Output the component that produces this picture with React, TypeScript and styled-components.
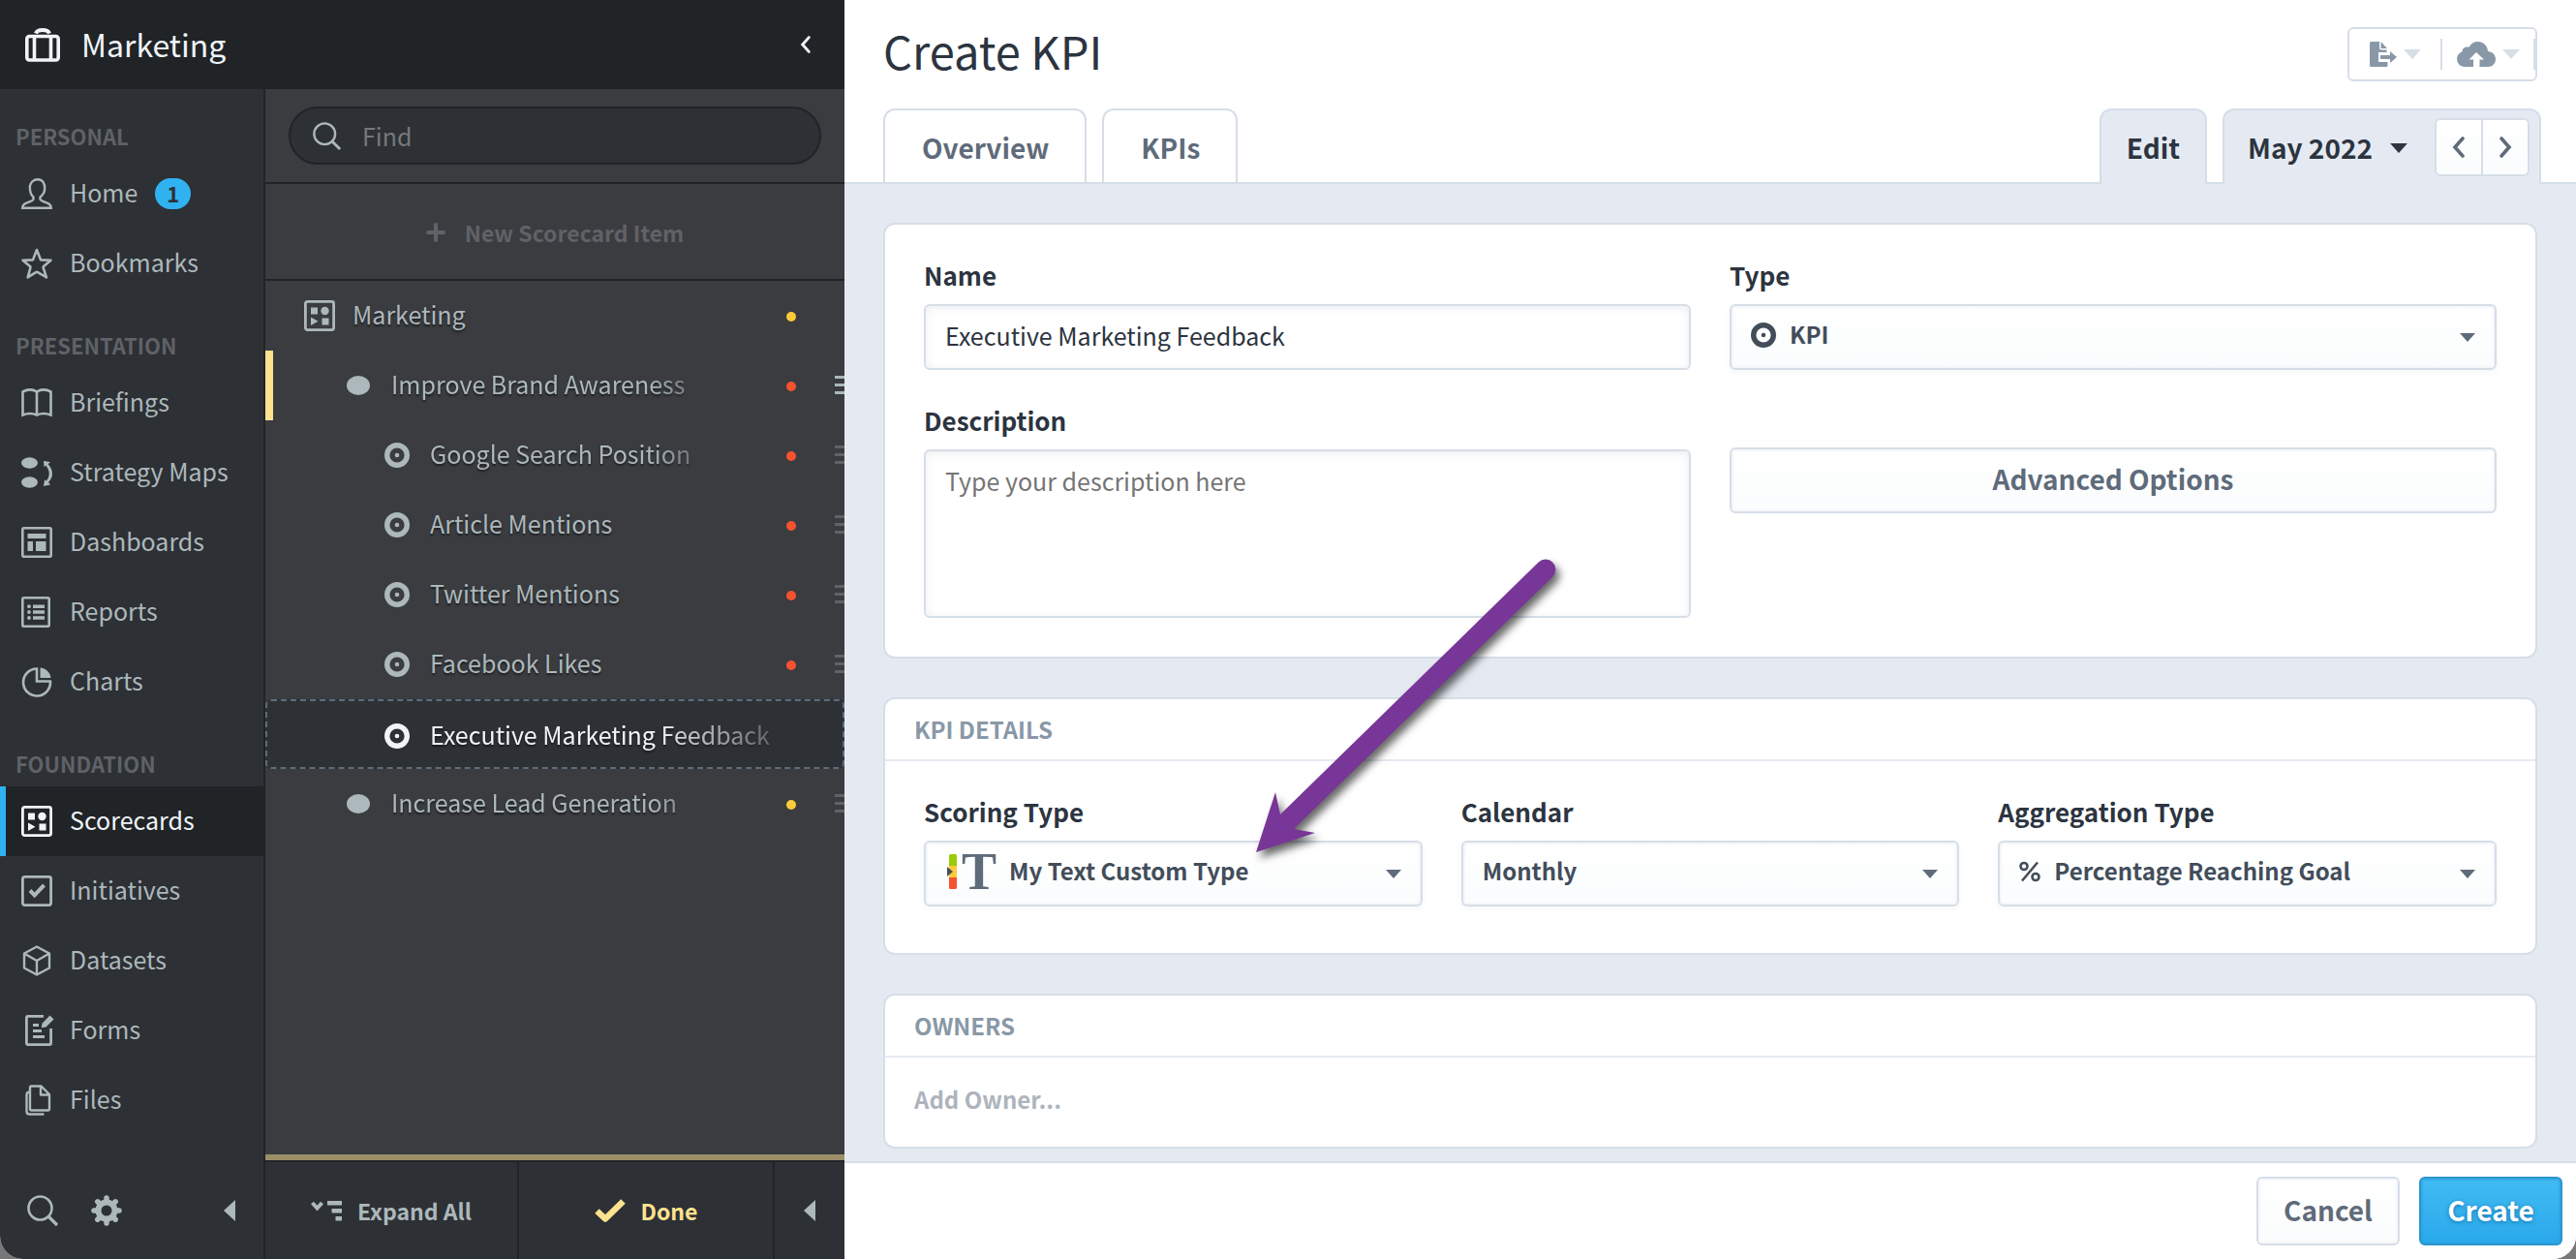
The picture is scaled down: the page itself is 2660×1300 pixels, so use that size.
import React from 'react';
import styled, { createGlobalStyle, css } from 'styled-components';

const c = {
  ink: '#2c3440',
  slate: '#5f6b7a',
  muted: '#8998a7',
  line: '#d6dee7',
  canvas: '#e5eaf2',
  black: '#202427',
  rail: '#2d3035',
  tree: '#3a3c40',
  fog: '#acb8bb',
  dim: '#5f6266',
  snow: '#f0f4f9',
  blue: '#30b2f0',
  yellow: '#ffe28f',
  amber: '#fdcb3a',
  red: '#f5522f',
};

const Global = createGlobalStyle`
  *, *::before, *::after { box-sizing: border-box; }
  body { margin: 0; background: #77787a; }
  body, button, input, select, textarea {
    font-family: "Noto Sans CJK SC", "Noto Sans", sans-serif;
    font-size: 25px;
    line-height: 36px;
  }
  button { border: 0; padding: 0; background: none; color: inherit; cursor: pointer; }
  a { color: inherit; text-decoration: none; }
  h1, h2, ul { margin: 0; padding: 0; }
  ul { list-style: none; }
  svg { display: block; flex: none; overflow: visible; }
`;

/* ---------- shell ---------- */

const Shell = styled.div`
  display: flex;
  height: 100vh;
  min-height: 1240px;
  overflow: hidden;
  border-radius: 0 0 24px 24px;
  background: #fff;
`;

const Side = styled.aside`
  display: grid;
  grid-template: 92px minmax(0, 1fr) / 274px 598px;
  flex: none;
`;

const SideHeader = styled.header`
  grid-column: 1 / -1;
  display: flex;
  align-items: center;
  gap: 20px;
  padding: 0 34px 0 24px;
  background: ${c.black};
  color: ${c.snow};
`;

const Workspace = styled.span`
  flex: 1;
  font-size: 32px;
  line-height: 48px;
  padding-bottom: 2px;
`;

/* ---------- navigation rail ---------- */

const Rail = styled.nav`
  display: flex;
  flex-direction: column;
  border-right: 2px solid ${c.black};
  background: ${c.rail};
  color: ${c.fog};
`;

const RailTitle = styled.h2`
  height: 72px;
  padding: 26px 0 0 16px;
  color: ${c.dim};
  font-size: 22px;
  line-height: 44px;
  font-weight: 700;
`;

const RailLink = styled.a<{ $active?: boolean }>`
  display: flex;
  align-items: center;
  gap: 18px;
  height: 72px;
  padding-left: 22px;
  ${(p) =>
    p.$active &&
    css`
      margin-right: -2px;
      padding-left: 16px;
      border-left: 6px solid ${c.blue};
      background: ${c.black};
      color: ${c.snow};
    `}
`;

const Label = styled.span`
  padding-bottom: 4px;
`;

const Badge = styled.span`
  display: grid;
  place-items: center;
  width: 37px;
  height: 32px;
  border-radius: 16px;
  padding-bottom: 2px;
  background: ${c.blue};
  color: ${c.rail};
  font-size: 22px;
  line-height: 30px;
  font-weight: 700;
`;

const RailTools = styled.div`
  display: flex;
  align-items: center;
  gap: 34px;
  height: 100px;
  margin-top: auto;
  padding: 0 29px 0 28px;

  button:last-child { margin-left: auto; }
`;

/* ---------- scorecard tree ---------- */

const Tree = styled.section`
  display: flex;
  flex-direction: column;
  min-width: 0;
  overflow: hidden;
  background: ${c.tree};
  color: ${c.fog};
`;

const FindBar = styled.div`
  padding: 18px 24px;
  border-bottom: 2px solid ${c.black};
`;

const FindBox = styled.label`
  display: flex;
  align-items: center;
  gap: 22px;
  height: 60px;
  padding: 0 23px;
  border: 2px solid ${c.black};
  border-radius: 30px;
  background: ${c.rail};
`;

const FindInput = styled.input`
  flex: 1;
  min-width: 0;
  border: 0;
  padding: 0;
  outline: 0;
  background: none;
  color: ${c.fog};
  &::placeholder { color: #76787a; opacity: 1; }
`;

const NewItem = styled.button`
  display: flex;
  align-items: center;
  justify-content: center;
  gap: 20px;
  height: 100px;
  padding-top: 2px;
  border-bottom: 2px solid ${c.black};
  color: ${c.dim};
  font-size: 23px;
  font-weight: 700;
`;

const TreeList = styled.ul`
  flex: 1;
  border-bottom: 6px solid #9c8f68;
`;

const TreeRow = styled.li<{ $depth: number; $marked?: boolean; $selected?: boolean }>`
  display: flex;
  align-items: center;
  height: 72px;
  padding-left: ${(p) => 40 + p.$depth * 40}px;
  ${(p) =>
    p.$marked &&
    css`
      border-left: 8px solid ${c.yellow};
      padding-left: ${32 + p.$depth * 40}px;
    `}
  ${(p) =>
    p.$selected &&
    css`
      border: 2px dashed #5f6d7b;
      border-radius: 6px;
      padding-top: 4px;
      padding-left: ${38 + p.$depth * 40}px;
      background: ${c.rail};
      color: ${c.snow};
    `}
`;

const TreeLink = styled.a<{ $fade?: 'short' | 'long' }>`
  display: flex;
  align-items: center;
  gap: 18px;
  flex: 1;
  min-width: 0;
  white-space: nowrap;
  text-shadow: 0 2px 2px rgba(0, 0, 0, 0.5);
  ${(p) =>
    p.$fade === 'short' &&
    css`
      mask-image: linear-gradient(to left, transparent 62px, #000 140px);
    `}
  ${(p) =>
    p.$fade === 'long' &&
    css`
      mask-image: linear-gradient(to left, transparent 30px, #000 196px);
    `}
`;

const IconCell = styled.span`
  display: flex;
  justify-content: center;
  width: 32px;
`;

const Status = styled.span<{ $tone: string }>`
  width: 10px;
  height: 10px;
  margin: 2px 40px 0 0;
  border-radius: 50%;
  background: ${(p) => p.$tone};
`;

const Grip = styled.button<{ $on?: boolean }>`
  width: 10px;
  overflow: hidden;
  color: ${(p) => (p.$on ? c.fog : c.dim)};
`;

const NoGrip = styled.span`
  width: 10px;
`;

const TreeFooter = styled.footer`
  display: grid;
  grid-template-columns: 260px 264px 1fr;
  height: 102px;
  border-top: 2px solid ${c.black};
  background: ${c.rail};
`;

const FooterButton = styled.button<{ $accent?: boolean }>`
  display: flex;
  align-items: center;
  justify-content: center;
  gap: 16px;
  font-size: 23px;
  font-weight: 700;
  color: ${(p) => (p.$accent ? c.yellow : c.fog)};
  & + & { border-left: 2px solid ${c.black}; }
`;

/* ---------- main ---------- */

const Main = styled.main`
  display: flex;
  flex-direction: column;
  flex: 1;
  min-width: 0;
  color: ${c.ink};
`;

const MainHeader = styled.header`
  display: flex;
  align-items: center;
  justify-content: space-between;
  height: 112px;
  padding: 0 40px;
`;

const Title = styled.h1`
  font-size: 47px;
  line-height: 68px;
  font-weight: 400;
  padding-bottom: 8px;
`;

const Toolbar = styled.div`
  display: flex;
  align-items: center;
  height: 56px;
  border: 2px solid ${c.line};
  border-radius: 6px;
  color: ${c.muted};
`;

const ToolButton = styled.button`
  display: flex;
  align-items: center;
  gap: 7px;
  height: 32px;
  padding: 0 14px 0 15px;
  border-right: 2px solid ${c.line};
  &:first-child { padding: 0 20px 0 21px; }
`;

const TabBar = styled.div`
  display: flex;
  align-items: flex-end;
  gap: 16px;
  height: 78px;
  padding: 0 36px 0 40px;
  border-bottom: 2px solid ${c.line};
`;

const tab = css`
  display: flex;
  align-items: center;
  height: 76px;
  border: 2px solid ${c.line};
  border-bottom: 0;
  border-radius: 12px 12px 0 0;
  font-size: 28px;
  line-height: 40px;
  font-weight: 700;
`;

const Tab = styled.a`
  ${tab}
  padding: 2px 37px 0 38px;
  color: ${c.slate};
`;

const activeTab = css`
  height: 78px;
  margin-bottom: -2px;
  background: ${c.canvas};
  color: ${c.ink};
`;

const EditTab = styled.a`
  ${tab}
  ${activeTab}
  padding: 0 26px;
  margin-left: auto;
`;

const DateTab = styled.div`
  ${tab}
  ${activeTab}
  padding: 0 10px 0 24px;
`;

const MonthPicker = styled.div`
  display: grid;
  align-items: center;
  width: 193px;
  & > * { grid-area: 1 / 1; }
  & > svg { justify-self: end; margin: 2px 28px 0 0; pointer-events: none; }
`;

const MonthSelect = styled.select`
  appearance: none;
  border: 0;
  padding: 0;
  outline: 0;
  background: none;
  color: inherit;
  font-size: 28px;
  line-height: 40px;
  font-weight: 700;
`;

const Stepper = styled.div`
  display: flex;
  height: 60px;
  border: 2px solid ${c.line};
  border-radius: 6px;
  background: linear-gradient(#fff, #fafcfd);
  color: ${c.slate};
`;

const StepButton = styled.button`
  display: grid;
  place-items: center;
  width: 46px;
  & + & { width: 48px; border-left: 2px solid ${c.line}; }
`;

const Content = styled.form`
  display: flex;
  flex-direction: column;
  gap: 40px;
  flex: 1;
  min-height: 0;
  overflow: hidden;
  padding: 40px 40px 0;
  background: ${c.canvas};
`;

const Card = styled.section`
  flex: none;
  border: 2px solid ${c.line};
  border-radius: 12px;
  background: #fff;
`;

const CardTitle = styled.h2`
  height: 64px;
  padding: 13px 30px;
  border-bottom: 2px solid ${c.canvas};
  color: ${c.muted};
  font-size: 24px;
  line-height: 36px;
  font-weight: 700;
`;

const Fields = styled.div<{ $cols: number; $end?: number }>`
  display: grid;
  grid-template-columns: repeat(${(p) => p.$cols}, minmax(0, 1fr));
  gap: 32px 40px;
  padding: 32px 40px ${(p) => p.$end ?? 40}px;
`;

const Field = styled.div`
  position: relative;
  display: flex;
  flex-direction: column;
  gap: 10px;
`;

const FieldLabel = styled.label`
  font-size: 26px;
  line-height: 40px;
  font-weight: 700;
`;

const control = css`
  width: 100%;
  border: 2px solid ${c.line};
  border-radius: 6px;
  outline: 0;
  color: ${c.ink};
`;

const TextBox = styled.input`
  ${control}
  height: 68px;
  padding: 0 20px 4px;
  box-shadow: inset 0 2px 8px rgba(60, 80, 110, 0.1);
`;

const TextArea = styled.textarea`
  ${control}
  display: block;
  height: 174px;
  padding: 12px 20px;
  resize: none;
  box-shadow: inset 0 2px 8px rgba(60, 80, 110, 0.1);
  &::placeholder { color: #757575; opacity: 1; }
`;

const Picker = styled.div`
  display: grid;
  align-items: center;
  color: #434d5a;
  & > * { grid-area: 1 / 1; }
  & > svg { margin: 0 0 4px 22px; pointer-events: none; }
  & > svg:last-child { justify-self: end; margin: 0 22px 0 0; }
`;

const Select = styled.select<{ $indent: number }>`
  ${control}
  appearance: none;
  height: 68px;
  padding: 0 60px 6px ${(p) => p.$indent}px;
  background: linear-gradient(#fff, #fafcfd);
  box-shadow: inset 0 0 0 2px #f5f7fb, 0 2px 6px rgba(60, 80, 110, 0.05);
  color: inherit;
  font-weight: 700;
  font-size: 24px;
`;

const Push = styled.button`
  height: 68px;
  padding: 0 38px 4px;
  border: 2px solid ${c.line};
  border-radius: 6px;
  background: linear-gradient(#fff, #fafcfd);
  box-shadow: inset 0 0 0 2px #f5f7fb;
  color: ${c.slate};
  font-size: 28px;
  line-height: 40px;
  font-weight: 700;
`;

const Advanced = styled(Push)`
  width: 100%;
  margin-top: 48px;
`;

const OwnerInput = styled.input`
  display: block;
  width: 100%;
  height: 92px;
  padding: 0 30px 8px;
  border: 0;
  outline: 0;
  background: none;
  font-size: 24px;
  font-weight: 700;
  color: ${c.ink};
  &::placeholder { color: #adb4bc; opacity: 1; }
`;

const Actions = styled.footer`
  display: flex;
  justify-content: flex-end;
  gap: 20px;
  height: 101px;
  padding: 14px;
  border-top: 2px solid ${c.line};
  background: #fff;
`;

const ActionButton = styled(Push)<{ $primary?: boolean }>`
  width: 148px;
  height: 71px;
  padding: 0 0 4px;
  ${(p) =>
    p.$primary &&
    css`
      border-color: #2b96cd;
      background: linear-gradient(#41bbf2, #29a8eb);
      box-shadow: inset 0 0 0 2px rgba(43, 160, 220, 0.5);
      color: #fff;
      text-shadow: 0 1px 4px rgba(0, 60, 110, 0.5);
    `}
`;

const Pointer = styled.svg`
  position: absolute;
  left: 326px;
  bottom: 36px;
  z-index: 2;
  pointer-events: none;
  filter: drop-shadow(4px 6px 4px rgba(0, 0, 0, 0.6));
`;

/* ---------- icons ---------- */

type IconProps = { children: React.ReactNode; w?: number; h?: number; box?: string; line?: number };

const Icon = ({ children, w = 32, h = w, box = `0 0 ${w} ${h}`, line = 0 }: IconProps) => (
  <svg
    width={w}
    height={h}
    viewBox={box}
    fill={line ? 'none' : 'currentColor'}
    stroke={line ? 'currentColor' : 'none'}
    strokeWidth={line || undefined}
    aria-hidden="true"
  >
    {children}
  </svg>
);

const Solid = { fill: 'currentColor', stroke: 'none' };

const Suitcase = () => (
  <Icon w={40} line={3.6}>
    <rect x="3.8" y="11.5" width="32.400" height="24.500" rx="2.500" />
    <path d="M11.500 11v26M28.500 11v26" />
    <path strokeWidth="4" d="M13 8.500c1-3 3-3.500 7-3.500s6 .5 7 3.500" />
  </Icon>
);
const Person = () => (
  <Icon line={2.400}>
    <path d="M12.500 19.500v2c0 1.200-1 1.700-4 2.900-4 1.600-7.300 2.300-7.300 6.400h29.600c0-4.100-3.300-4.800-7.300-6.400-3-1.200-4-1.700-4-2.900v-2c2-1.500 4.500-5 4.700-8.500.3-6.500-2.700-9.800-7.200-9.800S9.500 4.500 8.800 8.500c0 4 1.200 9 3.700 11z" />
  </Icon>
);
const Star = () => (
  <Icon line={2.600}>
    <path strokeLinejoin="round" d="M16 2l3.800 9.700c.2.500.6.700 1 .7l9.700.3-7.400 6.300c-.5.400-.6.900-.5 1.400l3.400 10-9.100-5.300c-.6-.3-1.200-.3-1.800 0L6.700 30.400l2.700-10c.2-.6 0-1-.4-1.400l-7.500-6.300 9.700-.3c.5 0 .8-.2 1-.7z" />
  </Icon>
);
const Book = () => (
  <Icon line={2.600}>
    <path d="M1.500 4.500C7 1.500 12 2 16 4.500c4-2.500 9-3 14.500 0v24c-5-2-10-2-14.500 0-4.500-2-9.500-2-14.500 0z" />
    <path d="M16 4.500v24.500" />
  </Icon>
);
const Maps = () => (
  <Icon>
    <ellipse cx="8.500" cy="6" rx="8.500" ry="5.800" />
    <ellipse cx="8.500" cy="26" rx="8.500" ry="5.800" />
    <path d="M23 4l7 1-2.300 2.200c3 3.500 4.300 6.300 4.300 9.800s-1.300 6-4 9l2 2.600-7 1.400 1-6.800 1.800 1.300c2-2.500 2.900-4.600 2.900-7.500s-1-5.300-3.200-8.300L23.500 10z" />
  </Icon>
);
const Dashboard = () => (
  <Icon line={2.600}>
    <rect x="1.300" y="1.300" width="29.400" height="29.400" rx="1.500" />
    <path {...Solid} d="M6.500 7h19v5h-19zM6.500 15h5.500v10H6.500zM15 15h10.500v10H15z" />
  </Icon>
);
const Report = () => (
  <Icon line={2.600}>
    <rect x="1.300" y="1.300" width="27.400" height="29.400" rx="1.500" />
    <path {...Solid} d="M12 8.500h12v3.500H12zM12 14.300h12v3.500H12zM12 20.200h12v3.500H12z" />
    <g {...Solid}>
      <circle cx="8" cy="10.200" r="1.900" />
      <circle cx="8" cy="16" r="1.900" />
      <circle cx="8" cy="22" r="1.900" />
    </g>
  </Icon>
);
const Pie = () => (
  <Icon line={2.600}>
    <path d="M16 2.500A14 14 0 1 0 30 15.500H16z" />
    <path {...Solid} d="M19.500 1.500c6 .5 10.500 5 11 10.500h-11z" />
  </Icon>
);
const Scorecard = () => (
  <Icon line={2.800}>
    <rect x="1.400" y="1.400" width="29.200" height="29.200" rx="2" />
    <g {...Solid}>
      <path d="M7 7.500h7v7H7zM18.500 18.500h7v7h-7zM7 17.500l7.500 4.300L7 26z" />
      <circle cx="21.500" cy="11" r="4.200" />
    </g>
  </Icon>
);
const Check = () => (
  <Icon line={2.800}>
    <rect x="1.400" y="1.400" width="29.200" height="29.200" rx="2" />
    <path strokeWidth="4" d="M9 15.500l4.700 4.800L23.500 10" />
  </Icon>
);
const Cube = () => (
  <Icon line={2.400}>
    <path strokeLinejoin="round" d="M16 1.500l13 7v15l-13 7-13-7v-15zM3 8.500l13 7.500 13-7.500M16 16v14.500" />
  </Icon>
);
const Form = () => (
  <Icon line={2.800}>
    <path d="M23 1.400H6.900q-1.500 0-1.500 1.500v26.200q0 1.500 1.500 1.500h22.200q1.500 0 1.500-1.500V14" />
    <path {...Solid} d="M12 9h6v3h-6zM12 15h9v3h-9zM12 21h12v3H12zM29.500.5l4 4-8 8-4.700.7.700-4.500z" />
  </Icon>
);
const Files = () => (
  <Icon line={2.400}>
    <path strokeLinejoin="round" d="M10.500 1.500h10l8.500 8.500v15q0 1.500-1.500 1.500h-17Q9 26.500 9 25V3q0-1.500 1.500-1.500zM20 1.500V10.500h9" />
    <path d="M9 7.500q-3.500 0-3.500 3v17q0 3 3 3h15" />
  </Icon>
);
const Search = ({ size = 32 }: { size?: number }) => (
  <Icon w={size} box="0 0 32 32" line={2.600}>
    <circle cx="13.500" cy="13.500" r="12" />
    <path strokeWidth="3.200" d="M22 22l9 9" />
  </Icon>
);
const Gear = () => (
  <Icon line={6}>
    <circle cx="16" cy="16" r="8.500" />
    <path strokeWidth="5.500" strokeLinecap="round" d="M16 3v3M16 26v3M3 16h3M26 16h3M6.800 6.800l2 2M23.200 23.200l2 2M6.800 25.200l2-2M23.200 8.800l2-2" />
  </Icon>
);
const Left = () => <Icon w={12} h={22}><path d="M12 0v22L0 11z" /></Icon>;
const Chevron = ({ flip, w = 12, h = 22 }: { flip?: boolean; w?: number; h?: number }) => (
  <Icon w={w} h={h} box="0 0 12 22" line={3.600}>
    <path strokeLinecap="round" d={flip ? 'M2 2l8 9-8 9' : 'M10 2l-8 9 8 9'} />
  </Icon>
);
const Caret = ({ w = 16, h = 9, tone }: { w?: number; h?: number; tone: string }) => (
  <svg width={w} height={h} viewBox="0 0 16 9" aria-hidden="true"><path fill={tone} d="M0 0h16L8 9z" /></svg>
);
const Plus = () => <Icon w={20} line={4}><path strokeLinecap="round" d="M10 2v16M2 10h16" /></Icon>;
const Oval = () => <Icon w={24} h={20}><ellipse cx="12" cy="10" rx="12" ry="10" /></Icon>;
const Target = () => (
  <Icon w={26} line={5.400}>
    <circle cx="13" cy="13" r="10.300" />
    <circle {...Solid} cx="13" cy="13" r="2.300" />
  </Icon>
);
const Bars = () => <Icon w={24} h={20}><path d="M0 0h24v3H0zM0 8h24v3H0zM0 16h24v3H0z" /></Icon>;
const ExpandIcon = () => (
  <Icon w={32} h={20}>
    <path d="M17 0h15v4.500H17zM21.500 8H32v4.500H21.500zM25.500 16H32v4.500h-6.500z" />
    <path fill="none" stroke="currentColor" strokeWidth="4" d="M1.500 2l5 5.500 5-5.500" />
  </Icon>
);
const Tick = () => <Icon w={32} h={24} line={6.500}><path strokeLinejoin="round" d="M2.500 12.500l8.500 8L29.500 2.500" /></Icon>;
const Export = () => (
  <Icon w={28} h={26}>
    <path d="M1.500 0H10v6.500q0 2 2 2h5.500V11H9v10h9.500v3.500q0 1.500-1.500 1.500H1.500Q0 26 0 24.500v-23Q0 0 1.500 0zM11.500 0l6.500 7h-6.500z" />
    <path d="M11 14h10v-4l7 6-7 6v-4H11z" />
  </Icon>
);
const Cloud = () => (
  <Icon w={40} h={26}>
    <path d="M8 26a8 8 0 0 1-8-8c0-3.500 2-6.500 5.500-7.500C5.500 7 8.500 5 12.500 5.800 14.500 2 17.500 0 21.500 0c6 0 10.300 4.500 10.500 10 4.500.5 8 3.500 8 8s-3.500 8-8 8h-8.500v-7.500H28L20 11l-7.500 7.500H17V26z" />
  </Icon>
);
const Percent = () => (
  <Icon w={22} h={22} line={2.600}>
    <circle cx="5" cy="5.500" r="3.500" />
    <circle cx="17" cy="16.500" r="3.500" />
    <path d="M19 1.500L3 20.500" />
  </Icon>
);
const TextScore = () => (
  <svg width="52" height="38" viewBox="0 0 52 38" aria-hidden="true">
    <path fill="#99cc06" d="M4 13V2.500Q4 1 5.500 1h5Q12 1 12 2.500V13z" />
    <path fill={c.amber} d="M4 13h8v12H4z" />
    <path fill={c.red} d="M4 25h8v10.500q0 1.500-1.500 1.500h-5Q4 37 4 35.500z" />
    <path fill="#4a5058" d="M2 14l6 5-6 5z" />
    <text x="17" y="37" fill={c.slate} fontFamily="Liberation Serif, serif" fontWeight="700" fontSize="54">T</text>
  </svg>
);

/* ---------- data ---------- */

const sections = [
  { title: 'PERSONAL', items: [['Home', Person], ['Bookmarks', Star]] },
  {
    title: 'PRESENTATION',
    items: [['Briefings', Book], ['Strategy Maps', Maps], ['Dashboards', Dashboard], ['Reports', Report], ['Charts', Pie]],
  },
  {
    title: 'FOUNDATION',
    items: [['Scorecards', Scorecard], ['Initiatives', Check], ['Datasets', Cube], ['Forms', Form], ['Files', Files]],
  },
] as { title: string; items: [string, React.FC][] }[];

type Node = {
  name: string;
  depth: number;
  icon: React.FC;
  tone?: string;
  fade?: 'short' | 'long';
  marked?: boolean;
  selected?: boolean;
};

const nodes: Node[] = [
  { name: 'Marketing', depth: 0, icon: Scorecard, tone: c.amber },
  { name: 'Improve Brand Awareness', depth: 1, icon: Oval, tone: c.red, fade: 'short', marked: true },
  { name: 'Google Search Position', depth: 2, icon: Target, tone: c.red, fade: 'short' },
  { name: 'Article Mentions', depth: 2, icon: Target, tone: c.red },
  { name: 'Twitter Mentions', depth: 2, icon: Target, tone: c.red },
  { name: 'Facebook Likes', depth: 2, icon: Target, tone: c.red },
  { name: 'Executive Marketing Feedback', depth: 2, icon: Target, fade: 'long', selected: true },
  { name: 'Increase Lead Generation', depth: 1, icon: Oval, tone: c.amber, fade: 'short' },
];

/* ---------- page ---------- */

export default function App() {
  return (
    <>
      <Global />
      <Shell>
        <Side>
          <SideHeader>
            <Suitcase />
            <Workspace>Marketing</Workspace>
            <button type="button" aria-label="Collapse"><Chevron w={12} h={18} /></button>
          </SideHeader>

          <Rail aria-label="Primary">
            {sections.map((s) => (
              <React.Fragment key={s.title}>
                <RailTitle>{s.title}</RailTitle>
                {s.items.map(([name, Glyph]) => (
                  <RailLink key={name} href="#" $active={name === 'Scorecards'}>
                    <Glyph />
                    <Label>{name}</Label>
                    {name === 'Home' && <Badge>1</Badge>}
                  </RailLink>
                ))}
              </React.Fragment>
            ))}
            <RailTools>
              <button type="button" aria-label="Search"><Search /></button>
              <button type="button" aria-label="Settings"><Gear /></button>
              <button type="button" aria-label="Collapse navigation"><Left /></button>
            </RailTools>
          </Rail>

          <Tree aria-label="Scorecard items">
            <FindBar>
              <FindBox>
                <Search size={29} />
                <FindInput placeholder="Find" aria-label="Find" />
              </FindBox>
            </FindBar>
            <NewItem type="button"><Plus />New Scorecard Item</NewItem>
            <TreeList>
              {nodes.map((n) => (
                <TreeRow key={n.name} $depth={n.depth} $marked={n.marked} $selected={n.selected}>
                  <TreeLink href="#" $fade={n.fade}>
                    <IconCell><n.icon /></IconCell>
                    <Label>{n.name}</Label>
                  </TreeLink>
                  {n.tone && <Status $tone={n.tone} />}
                  {n.tone && (n.depth > 0 ? (
                    <Grip type="button" $on={n.marked} aria-label={`Move ${n.name}`}><Bars /></Grip>
                  ) : <NoGrip />)}
                </TreeRow>
              ))}
            </TreeList>
            <TreeFooter>
              <FooterButton type="button"><ExpandIcon />Expand All</FooterButton>
              <FooterButton type="button" $accent><Tick />Done</FooterButton>
              <FooterButton type="button" aria-label="Collapse tree"><Left /></FooterButton>
            </TreeFooter>
          </Tree>
        </Side>

        <Main>
          <MainHeader>
            <Title>Create KPI</Title>
            <Toolbar>
              <ToolButton type="button" aria-label="Export"><Export /><Caret w={18} h={10} tone={c.line} /></ToolButton>
              <ToolButton type="button" aria-label="Upload"><Cloud /><Caret w={18} h={10} tone={c.line} /></ToolButton>
            </Toolbar>
          </MainHeader>
          <TabBar>
            <Tab href="#">Overview</Tab>
            <Tab href="#">KPIs</Tab>
            <EditTab href="#">Edit</EditTab>
            <DateTab>
              <MonthPicker>
                <MonthSelect aria-label="Period" defaultValue="May 2022"><option>May 2022</option></MonthSelect>
                <Caret w={18} h={10} tone={c.ink} />
              </MonthPicker>
              <Stepper>
                <StepButton type="button" aria-label="Previous period"><Chevron /></StepButton>
                <StepButton type="button" aria-label="Next period"><Chevron flip /></StepButton>
              </Stepper>
            </DateTab>
          </TabBar>

          <Content>
            <Card>
              <Fields $cols={2}>
                <Field>
                  <FieldLabel htmlFor="name">Name</FieldLabel>
                  <TextBox id="name" defaultValue="Executive Marketing Feedback" />
                </Field>
                <Field>
                  <FieldLabel htmlFor="type">Type</FieldLabel>
                  <Picker>
                    <Select id="type" $indent={60} defaultValue="KPI"><option>KPI</option></Select>
                    <Target />
                    <Caret tone={c.slate} />
                  </Picker>
                </Field>
                <Field>
                  <FieldLabel htmlFor="description">Description</FieldLabel>
                  <TextArea id="description" placeholder="Type your description here" />
                </Field>
                <Field>
                  <Advanced type="button">Advanced Options</Advanced>
                </Field>
              </Fields>
            </Card>

            <Card>
              <CardTitle>KPI DETAILS</CardTitle>
              <Fields $cols={3} $end={48}>
                <Field>
                  <FieldLabel htmlFor="scoring">Scoring Type</FieldLabel>
                  <Picker>
                    <Select id="scoring" $indent={86} defaultValue="My Text Custom Type"><option>My Text Custom Type</option></Select>
                    <TextScore />
                    <Caret tone={c.slate} />
                  </Picker>
                  <Pointer width="340" height="340" viewBox="0 0 340 340" aria-hidden="true">
                    <path fill="#783698" d="M308.700 20.600a10.300 10.300 0 0 1 14.600 14.800L56 296l22 4-61 20 20-62 5 23z" />
                  </Pointer>
                </Field>
                <Field>
                  <FieldLabel htmlFor="calendar">Calendar</FieldLabel>
                  <Picker>
                    <Select id="calendar" $indent={20} defaultValue="Monthly"><option>Monthly</option></Select>
                    <Caret tone={c.slate} />
                  </Picker>
                </Field>
                <Field>
                  <FieldLabel htmlFor="aggregation">Aggregation Type</FieldLabel>
                  <Picker>
                    <Select id="aggregation" $indent={56} defaultValue="Percentage Reaching Goal"><option>Percentage Reaching Goal</option></Select>
                    <Percent />
                    <Caret tone={c.slate} />
                  </Picker>
                </Field>
              </Fields>
            </Card>

            <Card>
              <CardTitle>OWNERS</CardTitle>
              <OwnerInput placeholder="Add Owner..." aria-label="Add Owner" />
            </Card>
          </Content>

          <Actions>
            <ActionButton type="button">Cancel</ActionButton>
            <ActionButton type="button" $primary>Create</ActionButton>
          </Actions>
        </Main>
      </Shell>
    </>
  );
}
